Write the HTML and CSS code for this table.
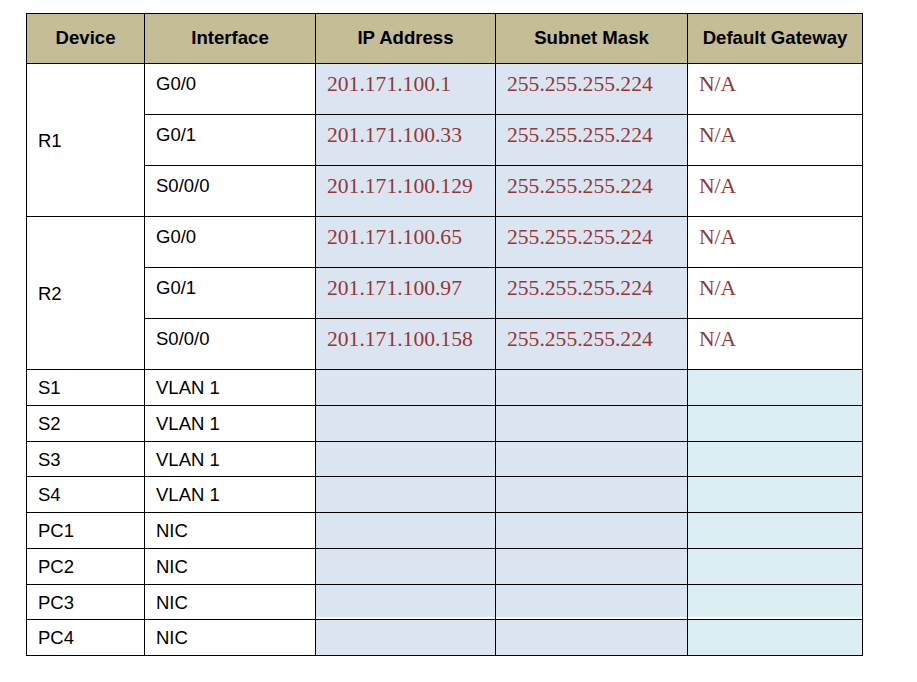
FILE: index.html
```html
<!DOCTYPE html>
<html>
<head>
<meta charset="utf-8">
<link rel="stylesheet" href="styles.css">
</head>
<body>
<table class="addr">
  <colgroup>
    <col class="c-dev"><col class="c-if"><col class="c-ip"><col class="c-mask"><col class="c-gw">
  </colgroup>
  <thead>
    <tr class="head">
      <th>Device</th><th>Interface</th><th>IP Address</th><th>Subnet Mask</th><th>Default Gateway</th>
    </tr>
  </thead>
  <tbody>
    <tr class="tall">
      <td class="dev" rowspan="3">R1</td><td>G0/0</td>
      <td class="ip val">201.171.100.1</td><td class="ip val">255.255.255.224</td><td class="val">N/A</td>
    </tr>
    <tr class="tall">
      <td>G0/1</td>
      <td class="ip val">201.171.100.33</td><td class="ip val">255.255.255.224</td><td class="val">N/A</td>
    </tr>
    <tr class="tall">
      <td>S0/0/0</td>
      <td class="ip val">201.171.100.129</td><td class="ip val">255.255.255.224</td><td class="val">N/A</td>
    </tr>
    <tr class="tall">
      <td class="dev" rowspan="3">R2</td><td>G0/0</td>
      <td class="ip val">201.171.100.65</td><td class="ip val">255.255.255.224</td><td class="val">N/A</td>
    </tr>
    <tr class="tall">
      <td>G0/1</td>
      <td class="ip val">201.171.100.97</td><td class="ip val">255.255.255.224</td><td class="val">N/A</td>
    </tr>
    <tr class="tall">
      <td>S0/0/0</td>
      <td class="ip val">201.171.100.158</td><td class="ip val">255.255.255.224</td><td class="val">N/A</td>
    </tr>
    <tr class="short"><td>S1</td><td>VLAN 1</td><td class="ip"></td><td class="ip"></td><td class="gw"></td></tr>
    <tr class="short"><td>S2</td><td>VLAN 1</td><td class="ip"></td><td class="ip"></td><td class="gw"></td></tr>
    <tr class="short"><td>S3</td><td>VLAN 1</td><td class="ip"></td><td class="ip"></td><td class="gw"></td></tr>
    <tr class="short"><td>S4</td><td>VLAN 1</td><td class="ip"></td><td class="ip"></td><td class="gw"></td></tr>
    <tr class="short"><td>PC1</td><td>NIC</td><td class="ip"></td><td class="ip"></td><td class="gw"></td></tr>
    <tr class="short"><td>PC2</td><td>NIC</td><td class="ip"></td><td class="ip"></td><td class="gw"></td></tr>
    <tr class="short gap"><td>PC3</td><td>NIC</td><td class="ip"></td><td class="ip"></td><td class="gw"></td></tr>
    <tr class="short"><td>PC4</td><td>NIC</td><td class="ip"></td><td class="ip"></td><td class="gw"></td></tr>
  </tbody>
</table>
</body>
</html>
```
FILE: styles.css
```css
html, body {
  margin: 0;
  padding: 0;
  background: #ffffff;
}

body {
  padding: 13px 0 0 26px;
  font-family: "Liberation Sans", Arial, sans-serif;
  color: #000;
}

.addr {
  border-collapse: collapse;
  table-layout: fixed;
  width: 836px;
}

.c-dev { width: 118px; }
.c-if { width: 171px; }
.c-ip { width: 180px; }
.c-mask { width: 192px; }
.c-gw { width: 175px; }

.addr th,
.addr td {
  border: 1px solid #000;
  box-sizing: border-box;
  padding: 9px 11px 0 11px;
  vertical-align: top;
  text-align: left;
  font-size: 18.5px;
  line-height: 21px;
}

.addr th {
  background: #c4bd97;
  font-weight: bold;
  font-size: 18.6px;
  text-align: center;
  vertical-align: middle;
  padding: 0 4px 3px 4px;
}

.head { height: 50px; }
.tall { height: 51px; }
.short { height: 35.75px; }

.short td { padding-top: 7px; }

.addr td.dev {
  vertical-align: middle;
  padding-top: 0;
}

.addr td.ip { background: #dbe5f1; }
.addr td.gw { background: #daeef3; }

.addr td.val {
  font-family: "Liberation Serif", "Times New Roman", serif;
  font-size: 21.6px;
  line-height: 23px;
  color: #953735;
  padding-top: 9px;
}

.gap td.ip,
.gap td.gw {
  box-shadow: inset 0 -2px 0 #ffffff;
}
```
